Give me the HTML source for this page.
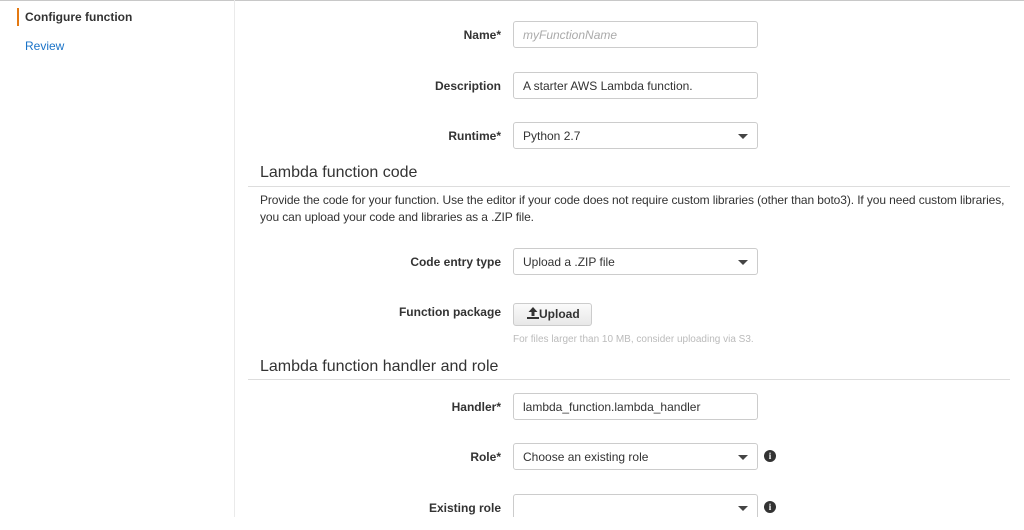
<!DOCTYPE html>
<html><head><style>
body{margin:0;width:1024px;height:530px;background:#fff;font-family:"Liberation Sans",Arial,sans-serif;position:relative;overflow:hidden;color:#333}
.a{position:absolute}
.top{left:0;top:0;width:1024px;height:1px;background:#c8c8c8}
.side{left:234px;top:0;width:1px;height:517px;background:#eaeaea}
.lbl{font-size:12px;font-weight:bold;color:#333;text-align:right;width:300px;left:201px}
.in{left:513px;font-size:12px;line-height:27px;padding-left:9px;box-sizing:border-box;width:245px;height:27px;border:1px solid #ccc;border-radius:3px}
.car{position:absolute;right:9px;top:11px;border-left:5px solid transparent;border-right:5px solid transparent;border-top:5px solid #444}
.h{left:260px;font-size:16px;color:#333}
.hr{left:248px;width:762px;height:1px;background:#ddd}
.i{width:12px;height:12px;border-radius:50%;background:#333;color:#fff;font-size:9px;font-weight:bold;text-align:center;line-height:12px;font-family:"Liberation Serif",serif;left:764px}
</style></head><body>
<div class="a top"></div>
<div class="a side"></div>
<div class="a" style="left:17px;top:8px;width:2px;height:18px;background:#e47911"></div>
<div class="a" style="left:25px;top:10px;font-size:12px;font-weight:bold;color:#333">Configure function</div>
<div class="a" style="left:25px;top:39px;font-size:12px;color:#1a73c8">Review</div>

<div class="a lbl" style="top:28px">Name*</div>
<div class="a in" style="top:21px;color:#aaa;font-style:italic">myFunctionName</div>
<div class="a lbl" style="top:79px">Description</div>
<div class="a in" style="top:72px">A starter AWS Lambda function.</div>
<div class="a lbl" style="top:129px">Runtime*</div>
<div class="a in" style="top:122px">Python 2.7<span class="car"></span></div>

<div class="a h" style="top:164px">Lambda function code</div>
<div class="a hr" style="top:186px"></div>
<div class="a" style="left:260px;top:192px;font-size:12px;line-height:17px;width:745px;letter-spacing:-0.1px">Provide the code for your function. Use the editor if your code does not require custom libraries (other than boto3). If you need custom libraries, you can upload your code and libraries as a .ZIP file.</div>

<div class="a lbl" style="top:255px">Code entry type</div>
<div class="a in" style="top:248px">Upload a .ZIP file<span class="car"></span></div>
<div class="a lbl" style="top:305px">Function package</div>
<div class="a" style="left:513px;top:303px;width:79px;height:23px;border:1px solid #ccc;border-radius:3px;background:linear-gradient(#fafafa,#e8e8e8);box-sizing:border-box;font-size:12px;font-weight:bold;line-height:21px;color:#333;padding-left:13px"><svg width="12" height="12" viewBox="0 0 12 12" style="vertical-align:-1px"><path d="M6 0L1.5 5H4.5V9H7.5V5H10.5Z" fill="#333"/><rect x="0" y="10" width="12" height="2" fill="#333"/></svg>Upload</div>
<div class="a" style="left:513px;top:334px;font-size:10px;color:#bbb">For files larger than 10 MB, consider uploading via S3.</div>

<div class="a h" style="top:358px">Lambda function handler and role</div>
<div class="a hr" style="top:379px"></div>

<div class="a lbl" style="top:400px">Handler*</div>
<div class="a in" style="top:393px">lambda_function.lambda_handler</div>
<div class="a lbl" style="top:450px">Role*</div>
<div class="a in" style="top:443px">Choose an existing role<span class="car"></span></div>
<div class="a i" style="top:450px">i</div>
<div class="a lbl" style="top:501px">Existing role</div>
<div class="a in" style="top:494px;height:23px;border-bottom:none;border-radius:3px 3px 0 0"><span class="car"></span></div>
<div class="a i" style="top:501px">i</div>
</body></html>
